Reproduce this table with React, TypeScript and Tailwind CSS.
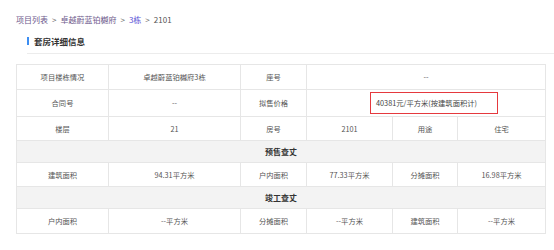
const cell = "border border-[#e6e6e6] text-center align-middle text-[#555] font-normal";

type Row = string[];

function SectionHeader({ title }: { title: string }) {
  return (
    <tr className="h-[22px] bg-[#f3f3f3]">
      <td colSpan={6} className="border border-[#e6e6e6] text-center font-bold text-[8px] text-[#333]">
        {title}
      </td>
    </tr>
  );
}

function PlainRow({ cells, h }: { cells: Row; h: string }) {
  return (
    <tr className={h}>
      {cells.map((c, i) => (
        <td key={i} className={cell}>
          {c}
        </td>
      ))}
    </tr>
  );
}

export default function App() {
  return (
    <div
      className="w-[554px] h-[250px] bg-white overflow-hidden"
      style={{ fontFamily: '"Noto Sans CJK SC", "Noto Sans", sans-serif' }}
    >
      <div className="pl-[16px] pt-[14px] text-[8px] leading-[12px] flex items-center gap-[4px] text-[#666]">
        <span className="text-[#6e5a8c]">项目列表</span>
        <span>&gt;</span>
        <span className="text-[#6e5a8c]">卓越蔚蓝铂樾府</span>
        <span>&gt;</span>
        <span className="text-[#5a52d6]">3栋</span>
        <span>&gt;</span>
        <span className="text-[#555]">2101</span>
      </div>

      <div className="ml-[27px] mt-[9px] flex items-center gap-[5px]">
        <div className="w-[2px] h-[8px] bg-[#3d8ef2]" />
        <span className="text-[8.5px] font-bold text-[#333] leading-[12px]">套房详细信息</span>
      </div>
      <div className="ml-[27px] mt-[6px] h-px bg-[#ececec]" />

      <table className="ml-[16px] mt-[10px] w-[529px] table-fixed border-collapse text-[7.3px] leading-[10px]">
        <colgroup>
          <col className="w-[92px]" />
          <col className="w-[132px]" />
          <col className="w-[66px]" />
          <col className="w-[86px]" />
          <col className="w-[65px]" />
          <col className="w-[88px]" />
        </colgroup>
        <tbody>
          <tr className="h-[25px]">
            <td className={cell}>项目楼栋情况</td>
            <td className={cell}>卓越蔚蓝铂樾府3栋</td>
            <td className={cell}>座号</td>
            <td colSpan={3} className={cell}>
              --
            </td>
          </tr>
          <tr className="h-[27px]">
            <td className={cell}>合同号</td>
            <td className={cell}>--</td>
            <td className={cell}>拟售价格</td>
            <td colSpan={3} className={`${cell} !text-left pl-[63px]`}>
              <div className="w-[128px] h-[22px] border-[1.5px] border-[#e5393e] flex items-center pl-[5px] text-[#444]">
                40381元/平方米(按建筑面积计)
              </div>
            </td>
          </tr>
          <PlainRow h="h-[24px]" cells={["楼层", "21", "房号", "2101", "用途", "住宅"]} />
          <SectionHeader title="预售查丈" />
          <PlainRow
            h="h-[24px]"
            cells={["建筑面积", "94.31平方米", "户内面积", "77.33平方米", "分摊面积", "16.98平方米"]}
          />
          <SectionHeader title="竣工查丈" />
          <PlainRow
            h="h-[25px]"
            cells={["户内面积", "--平方米", "分摊面积", "--平方米", "建筑面积", "--平方米"]}
          />
        </tbody>
      </table>
    </div>
  );
}
